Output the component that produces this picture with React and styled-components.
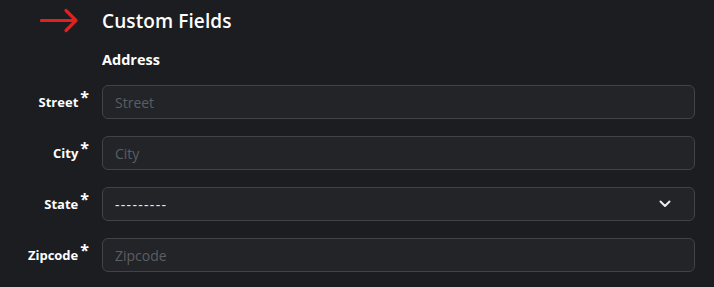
import React from 'react';
import styled, { createGlobalStyle } from 'styled-components';

const GlobalStyle = createGlobalStyle`
  html, body {
    margin: 0;
    padding: 0;
    background: #1b1d21;
  }
  body {
    font-family: "Open Sans", "Noto Sans", sans-serif;
    color: #f1f3f5;
  }
`;

const Page = styled.div`
  width: 714px;
  height: 287px;
  background: #1b1d21;
  padding: 0 19px 0 0;
  box-sizing: border-box;
  overflow: hidden;
`;

const Header = styled.div`
  display: grid;
  grid-template-columns: 102px 1fr;
  align-items: center;
  height: 42px;
`;

const ArrowCell = styled.div`
  display: flex;
  justify-content: flex-start;
  padding-left: 40px;
`;

const Title = styled.h2`
  margin: 0;
  font-size: 19px;
  font-weight: 600;
  color: #ffffff;
  letter-spacing: 0.1px;
`;

const Section = styled.h3`
  margin: 0;
  padding: 8px 0 0 102px;
  height: 43px;
  box-sizing: border-box;
  font-size: 14.5px;
  font-weight: 700;
  color: #ffffff;
`;

const Form = styled.div`
  display: flex;
  flex-direction: column;
  gap: 17px;
`;

const Row = styled.div`
  display: grid;
  grid-template-columns: 102px 1fr;
  align-items: center;
`;

const Label = styled.label`
  justify-self: end;
  padding-right: 13px;
  font-size: 13px;
  font-weight: 700;
  color: #ffffff;
  white-space: nowrap;
  display: flex;
  align-items: flex-start;
`;

const Req = styled.span`
  font-size: 16px;
  line-height: 1;
  margin-left: 2px;
  margin-top: -4px;
  font-weight: 700;
  color: #ffffff;
`;

const Field = styled.div`
  height: 34px;
  box-sizing: border-box;
  border: 1px solid #404347;
  border-radius: 6px;
  background: #222428;
  display: flex;
  align-items: center;
  justify-content: space-between;
  padding: 0 12px;
  font-size: 14px;
  color: ${p => (p.$placeholder ? '#5b5e63' : '#e9ecef')};
`;

const Dashes = styled.span`
  letter-spacing: 1.3px;
`;

const Arrow = () => (
  <svg width="40" height="26" viewBox="0 0 40 26">
    <path d="M1.5 12.5 H35" stroke="#e0211f" strokeWidth="3.2" strokeLinecap="round" />
    <path d="M26 2.5 L36 12.5 L26 22.5" stroke="#e0211f" strokeWidth="3.2" fill="none" strokeLinecap="round" strokeLinejoin="round" />
  </svg>
);

const Chevron = () => (
  <svg width="12" height="8" viewBox="0 0 12 8" style={{ marginRight: 11 }}>
    <path d="M1.5 1.5 L6 6 L10.5 1.5" stroke="#e9ecef" strokeWidth="2" fill="none" strokeLinecap="round" strokeLinejoin="round" />
  </svg>
);

const fields = [
  { label: 'Street', value: 'Street', placeholder: true },
  { label: 'City', value: 'City', placeholder: true },
  { label: 'State', value: '---------', select: true },
  { label: 'Zipcode', value: 'Zipcode', placeholder: true },
];

export default function App() {
  return (
    <Page>
      <GlobalStyle />
      <Header>
        <ArrowCell><Arrow /></ArrowCell>
        <Title>Custom Fields</Title>
      </Header>
      <Section>Address</Section>
      <Form>
        {fields.map(f => (
          <Row key={f.label}>
            <Label>{f.label}<Req>*</Req></Label>
            <Field $placeholder={f.placeholder}>
              {f.select ? <Dashes>{f.value}</Dashes> : <span>{f.value}</span>}
              {f.select && <Chevron />}
            </Field>
          </Row>
        ))}
      </Form>
    </Page>
  );
}
